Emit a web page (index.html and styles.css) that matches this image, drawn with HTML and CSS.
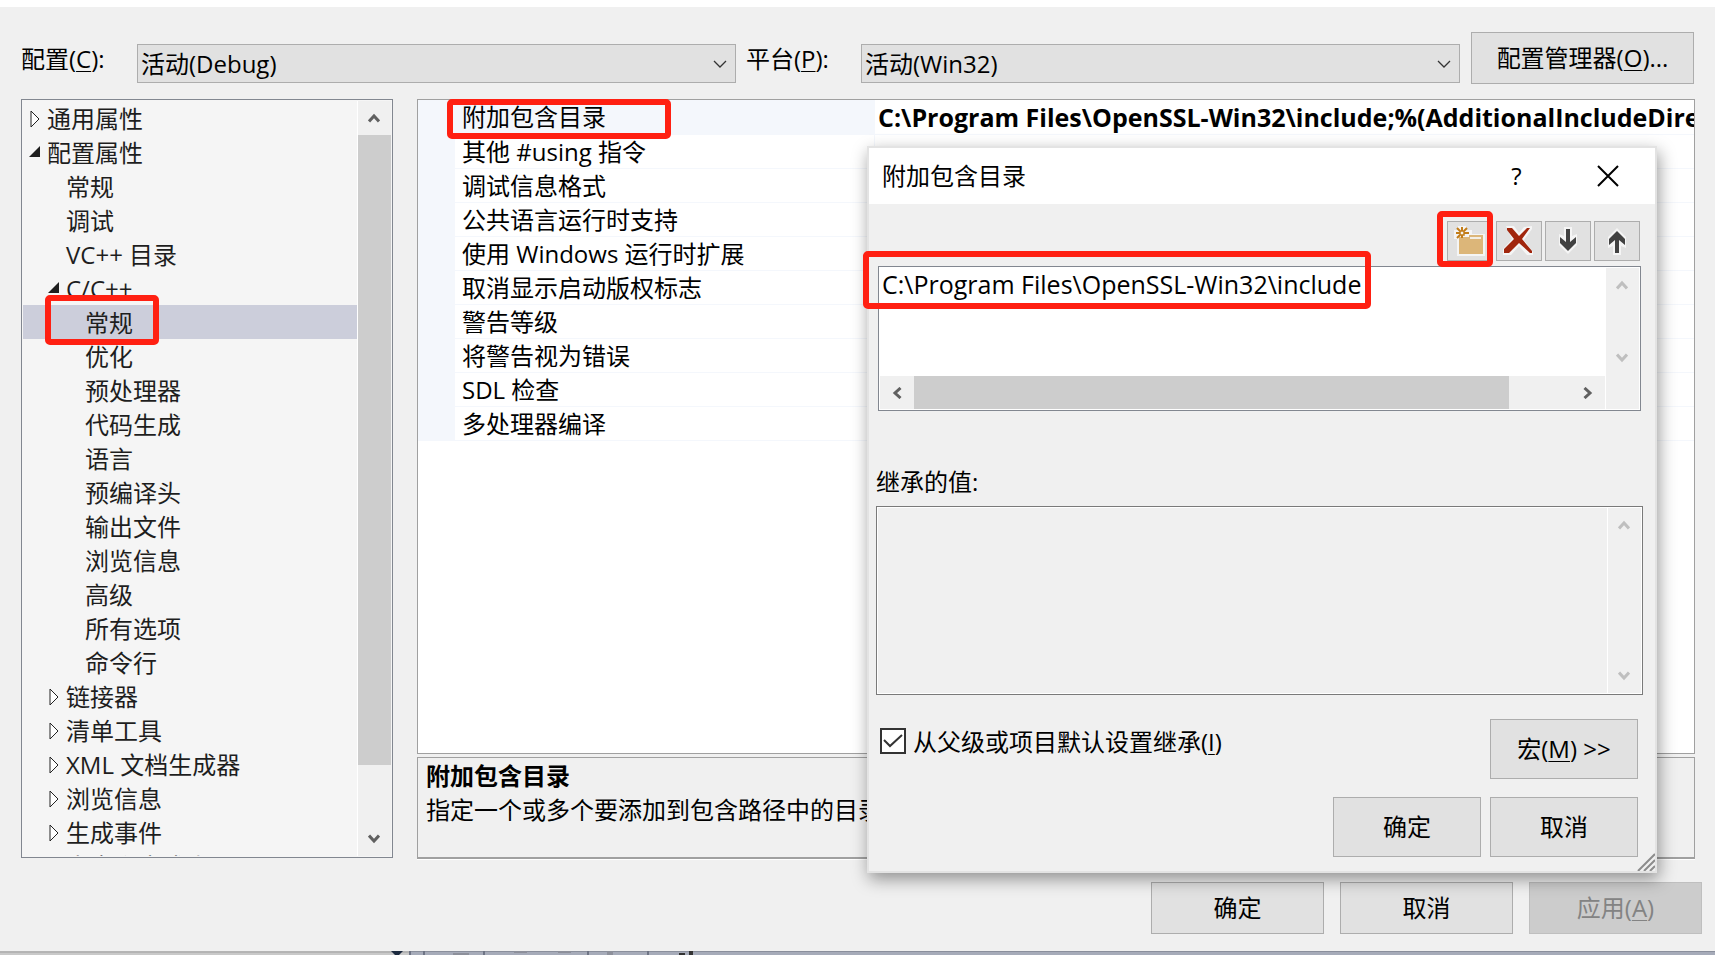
FILE: index.html
```html
<!DOCTYPE html>
<html lang="zh-CN">
<head>
  <meta charset="UTF-8">
  <title>属性页</title>
  <link rel="stylesheet" href="styles.css">
</head>
<body>

<svg class="defs" aria-hidden="true">
  <symbol id="up" viewBox="0 0 12 10"><path d="M1 8.500l5-5.500 5 5.500" fill="none" stroke="currentColor" stroke-width="3"/></symbol>
  <symbol id="down" viewBox="0 0 12 10"><path d="M1 1.500l5 5.500 5-5.500" fill="none" stroke="currentColor" stroke-width="3"/></symbol>
  <symbol id="left" viewBox="0 0 10 12"><path d="M8.500 1L3 6l5.500 5" fill="none" stroke="currentColor" stroke-width="3"/></symbol>
  <symbol id="right" viewBox="0 0 10 12"><path d="M1.500 1L7 6l-5.500 5" fill="none" stroke="currentColor" stroke-width="3"/></symbol>
  <symbol id="chevron" viewBox="0 0 14 8"><path d="M1 1l6 6 6-6" fill="none" stroke="#333" stroke-width="1.300"/></symbol>
  <symbol id="closed" viewBox="0 0 10 18"><path d="M1 1v16l8-8z" fill="#fff" stroke="#222" stroke-width="1"/></symbol>
  <symbol id="open" viewBox="0 0 11 11"><path d="M11 0v11H0z" fill="#1e1e1e"/></symbol>
</svg>

<div class="dialog">
  <div class="toolbar">
    <label class="config-label" for="config">配置(<u>C</u>):</label>
    <div class="combo">
      <select id="config"><option>活动(Debug)</option></select>
      <svg width="14" height="8"><use href="#chevron"/></svg>
    </div>
    <label class="platform-label" for="platform">平台(<u>P</u>):</label>
    <div class="combo">
      <select id="platform"><option>活动(Win32)</option></select>
      <svg width="14" height="8"><use href="#chevron"/></svg>
    </div>
    <button class="manager">配置管理器(<u>O</u>)...</button>
  </div>

  <div class="content">
    <div class="tree">
      <ul class="nodes">
        <li><svg class="closed"><use href="#closed"/></svg>通用属性</li>
        <li><svg class="open"><use href="#open"/></svg>配置属性</li>
        <li class="level2">常规</li>
        <li class="level2">调试</li>
        <li class="level2">VC++ 目录</li>
        <li class="level2"><svg class="open"><use href="#open"/></svg>C/C++</li>
        <li class="level3 selected">常规<span class="mark mark-tree"></span></li>
        <li class="level3">优化</li>
        <li class="level3">预处理器</li>
        <li class="level3">代码生成</li>
        <li class="level3">语言</li>
        <li class="level3">预编译头</li>
        <li class="level3">输出文件</li>
        <li class="level3">浏览信息</li>
        <li class="level3">高级</li>
        <li class="level3">所有选项</li>
        <li class="level3">命令行</li>
        <li class="level2"><svg class="closed"><use href="#closed"/></svg>链接器</li>
        <li class="level2"><svg class="closed"><use href="#closed"/></svg>清单工具</li>
        <li class="level2"><svg class="closed"><use href="#closed"/></svg>XML 文档生成器</li>
        <li class="level2"><svg class="closed"><use href="#closed"/></svg>浏览信息</li>
        <li class="level2"><svg class="closed"><use href="#closed"/></svg>生成事件</li>
        <li class="level2">自定义生成步骤</li>
      </ul>
      <div class="scroll">
        <button aria-label="向上"><svg width="12" height="10"><use href="#up"/></svg></button>
        <div class="thumb"></div>
        <div class="track"></div>
        <button aria-label="向下"><svg width="12" height="10"><use href="#down"/></svg></button>
      </div>
    </div>

    <div class="properties">
      <div class="grid">
        <table>
          <tr class="current">
            <td class="gutter"></td>
            <td class="name">附加包含目录<span class="mark mark-name"></span></td>
            <td class="value">C:\Program Files\OpenSSL-Win32\include;%(AdditionalIncludeDirectories)</td>
          </tr>
          <tr><td class="gutter"></td><td class="name">其他 #using 指令</td><td class="value"></td></tr>
          <tr><td class="gutter"></td><td class="name">调试信息格式</td><td class="value"></td></tr>
          <tr><td class="gutter"></td><td class="name">公共语言运行时支持</td><td class="value"></td></tr>
          <tr><td class="gutter"></td><td class="name">使用 Windows 运行时扩展</td><td class="value"></td></tr>
          <tr><td class="gutter"></td><td class="name">取消显示启动版权标志</td><td class="value"></td></tr>
          <tr><td class="gutter"></td><td class="name">警告等级</td><td class="value"></td></tr>
          <tr><td class="gutter"></td><td class="name">将警告视为错误</td><td class="value"></td></tr>
          <tr><td class="gutter"></td><td class="name">SDL 检查</td><td class="value"></td></tr>
          <tr><td class="gutter"></td><td class="name">多处理器编译</td><td class="value"></td></tr>
        </table>
      </div>
      <div class="description">
        <b>附加包含目录</b>
        <p>指定一个或多个要添加到包含路径中的目录</p>
      </div>
    </div>
  </div>

  <div class="footer">
    <button>确定</button>
    <button>取消</button>
    <button disabled>应用(<u>A</u>)</button>
  </div>

  <!-- Additional include directories popup -->
  <div class="popup" role="dialog" aria-labelledby="popup-title">
    <div class="titlebar">
      <span id="popup-title">附加包含目录</span>
      <button class="help">?</button>
      <button class="close" aria-label="关闭"><svg width="22" height="22" viewBox="0 0 22 22"><path d="M1 1l20 20M21 1L1 21" stroke="#000" stroke-width="2"/></svg></button>
    </div>

    <div class="popup-body">
      <div class="tools">
        <button aria-label="新行">
          <svg width="32" height="32" viewBox="0 0 32 32">
            <path d="M0 5h4V1h8v4h6v4h13v22H3V14H0z" fill="#f5f5f5"/>
            <path d="M5 12h10v-2h14v19H5z" fill="#dcb679"/>
            <path d="M16 12h11v2H16z" fill="#f3eee4"/>
            <path d="M8 2v4M8 10v3M2 8h4M10 8h5M3 3l3 3M13 3l-3 3M3 13l3-3" stroke="#c27d1a" stroke-width="2"/>
            <path d="M6 6h4v4H6z" fill="#f5f5f5" stroke="#c27d1a" stroke-width="1.500"/>
          </svg>
          <span class="mark mark-new"></span>
        </button>
        <button aria-label="删除">
          <svg width="32" height="32" viewBox="0 0 32 32">
            <path d="M3 1h8l5 7 5-6 8-1v3l-8 11 9 12v3h-6l-8-9-8 9H0v-6l9-10z" fill="#f5f5f5"/>
            <path d="M4 3h5l7 8 8-8h3l-8 11 10 12v2h-2L16 18 6 28H1v-4l10-10-7-9z" fill="#a1260d"/>
          </svg>
        </button>
        <button aria-label="下移">
          <svg width="32" height="32" viewBox="0 0 32 32">
            <path d="M12 2h8v9l5-2v11l-9 9-9-9V9l5 2z" fill="#f5f5f5"/>
            <path d="M14 4h4v13l6-5v6l-8 8-8-8v-6l6 5z" fill="#424242"/>
          </svg>
        </button>
        <button aria-label="上移">
          <svg width="32" height="32" viewBox="0 0 32 32">
            <path d="M12 30h8v-9l5 2V12l-9-9-9 9v11l5-2z" fill="#f5f5f5"/>
            <path d="M14 28h4V15l6 5v-6l-8-8-8 8v6l6-5z" fill="#424242"/>
          </svg>
        </button>
      </div>

      <div class="paths">
        <div class="paths-main">
          <input type="text" aria-label="目录" value="C:\Program Files\OpenSSL-Win32\include">
          <div class="hscroll">
            <button aria-label="向左"><svg width="10" height="12"><use href="#left"/></svg></button>
            <div class="thumb"></div>
            <div class="track"></div>
            <button aria-label="向右"><svg width="10" height="12"><use href="#right"/></svg></button>
          </div>
        </div>
        <div class="scroll off">
          <button aria-label="向上"><svg width="12" height="10"><use href="#up"/></svg></button>
          <div class="track"></div>
          <button aria-label="向下"><svg width="12" height="10"><use href="#down"/></svg></button>
        </div>
        <span class="mark mark-path"></span>
      </div>

      <label class="inherited-label" for="inherited">继承的值:</label>
      <div class="inherited">
        <textarea id="inherited" readonly></textarea>
        <div class="scroll off">
          <button aria-label="向上"><svg width="12" height="10"><use href="#up"/></svg></button>
          <div class="track"></div>
          <button aria-label="向下"><svg width="12" height="10"><use href="#down"/></svg></button>
        </div>
      </div>

      <div class="options">
        <div class="check">
          <input type="checkbox" id="inherit" checked>
          <svg width="20" height="16" viewBox="0 0 20 16"><path d="M1 7l6 6L19 2" fill="none" stroke="#333" stroke-width="2"/></svg>
          <label for="inherit">从父级或项目默认设置继承(<u>I</u>)</label>
        </div>
        <button class="big">宏(<u>M</u>) &gt;&gt;</button>
      </div>

      <div class="actions">
        <button class="big">确定</button>
        <button class="big">取消</button>
      </div>
    </div>
    <svg class="grip" width="18" height="18" viewBox="0 0 18 18">
      <path d="M1 18L18 1M7 18L18 7M13 18l5-5" stroke="#8c8c8c" stroke-width="2"/>
    </svg>
  </div>
</div>

<!-- top edge of the window behind -->
<div class="behind">
  <svg width="720" height="4" viewBox="0 0 720 4">
    <path d="M0 0h409v4H0z" fill="#c9c9c9"/>
    <path d="M0 1h409" stroke="#a0a0a0"/>
    <path d="M391 0h12l-4 4h-4z" fill="#1b293e"/>
    <path d="M409 0h2v4h-2zM423 0h2v4h-2zM483 0h2v4h-2zM587 0h2v4h-2zM647 0h2v4h-2z" fill="#6e7485"/>
    <path d="M453 2h16v2h-16zM514 0h13v2h-13zM558 0h13v2h-13zM607 0h6v4h-6z" fill="#8d909b"/>
    <path d="M679 2h6v2h-6zM689 0h4v4h-4z" fill="#333"/>
  </svg>
</div>

</body>
</html>
```

FILE: styles.css
```css
* {
  box-sizing: border-box;
}
body {
  margin: 0;
  min-height: 100vh;
  display: flex;
  flex-direction: column;
  background: #fff;
  color: #000;
  font: 24px/34px "Open Sans", "Noto Sans CJK SC", sans-serif;
}
button, input, select, textarea {
  font: inherit;
  color: inherit;
}
button {
  padding: 0;
  background: #e1e1e1;
  border: 1px solid #adadad;
}
u {
  text-decoration-thickness: 1px;
  text-underline-offset: 3px;
}
svg {
  display: block;
  flex: none;
}
.defs {
  position: absolute;
  width: 0;
  height: 0;
}
.dialog {
  position: relative;
  flex: 1;
  display: flex;
  flex-direction: column;
  margin-top: 7px;
  padding: 25px 13px 17px 21px;
  background: #f0f0f0;
}

/* red highlight frames */
.mark {
  position: absolute;
  z-index: 2;
  border: 6px solid #ff2012;
  border-radius: 5px;
  pointer-events: none;
}

/* top row */
.toolbar {
  display: flex;
  align-items: flex-start;
  padding-right: 8px;
}
.toolbar label {
  padding-top: 10px;
  white-space: nowrap;
}
.config-label {
  width: 116px;
}
.platform-label {
  width: 115px;
}
.combo {
  position: relative;
  flex: 1;
  margin: 12px 10px 0 0;
}
.combo + button {
  margin-left: 1px;
}
.combo select {
  display: block;
  width: 100%;
  height: 39px;
  padding: 0 3px;
  appearance: none;
  background: #e1e1e1;
  border: 1px solid #adadad;
  border-radius: 0;
}
.combo svg {
  position: absolute;
  right: 9px;
  top: 16px;
}
.manager {
  width: 223px;
  height: 52px;
}

/* tree and property grid */
.content {
  flex: 1;
  display: flex;
  gap: 24px;
  margin-top: 15px;
  padding-right: 7px;
}
.tree {
  display: flex;
  width: 372px;
  height: 759px;
  padding: 1px;
  background: #f5f5f5;
  border: 1px solid #828790;
}
.nodes {
  flex: 1;
  margin: 0;
  padding: 0;
  list-style: none;
  overflow: hidden;
  color: #1e1e1e;
}
.nodes li {
  position: relative;
  height: 34px;
  padding-left: 24px;
  line-height: 36px;
  white-space: nowrap;
}
.nodes .level2 {
  padding-left: 43px;
}
.nodes .level3 {
  padding-left: 62px;
}
.nodes .selected {
  background: #cccedb;
}
.nodes svg {
  float: left;
}
.nodes .closed {
  width: 10px;
  height: 18px;
  margin: 9px 7px 0 -17px;
}
.nodes .open {
  width: 11px;
  height: 11px;
  margin: 11px 7px 0 -18px;
}
.mark-tree {
  left: 22px;
  top: -10px;
  width: 114px;
  height: 50px;
}
.scroll {
  display: flex;
  flex-direction: column;
  width: 34px;
  background: #f0f0f0;
  border-left: 1px solid #fff;
  color: #606060;
}
.scroll button, .hscroll button {
  display: flex;
  align-items: center;
  justify-content: center;
  width: 32px;
  height: 34px;
  background: none;
  border: 0;
}
.thumb {
  background: #cdcdcd;
}
.tree .thumb {
  height: 630px;
}
.track {
  flex: 1;
}
.off {
  color: #bfbfbf;
}
.properties {
  flex: 1;
  min-width: 0;
  display: flex;
  flex-direction: column;
  gap: 3px;
  height: 760px;
}
.grid {
  flex: 1;
  background: #fff;
  border: 1px solid #a0a0a0;
}
.grid table {
  width: 100%;
  table-layout: fixed;
  border-collapse: separate;
  border-spacing: 0;
}
.grid td {
  height: 34px;
  padding: 0;
  line-height: 33px;
  white-space: nowrap;
  border-bottom: 1px solid #f4f7fc;
}
.grid .gutter {
  width: 37px;
  background: #f4f7fc;
}
.grid .name {
  position: relative;
  width: 420px;
  padding-left: 7px;
  border-right: 1px solid #f4f7fc;
}
.grid .current td {
  height: 35px;
  line-height: 34px;
}
.current .name {
  background: #f4f7fc;
}
.grid .value {
  padding-left: 3px;
  overflow: hidden;
  font-size: 25px;
  font-weight: bold;
}
.mark-name {
  left: -8px;
  top: -1px;
  width: 224px;
  height: 40px;
}
.description {
  height: 102px;
  padding: 1px 8px;
  border: 1px solid #a0a0a0;
  border-bottom-width: 2px;
  box-shadow: 0 1px #fff;
  white-space: nowrap;
  overflow: hidden;
}
.description b {
  display: block;
}
.description p {
  margin: 0;
}

/* bottom buttons */
.footer {
  display: flex;
  justify-content: flex-end;
  gap: 16px;
}
.footer button {
  width: 173px;
  height: 52px;
}
.footer button:disabled {
  color: #838383;
  background: #ccc;
  border-color: #bfbfbf;
}

/* popup window */
.popup {
  position: absolute;
  top: 139px;
  right: 58px;
  width: 790px;
  background: #f0f0f0;
  border: 2px solid #e3e3e3;
  box-shadow: 2px 6px 16px rgba(0,0,0,0.4);
}
.titlebar {
  display: flex;
  align-items: center;
  height: 56px;
  padding: 0 2px 0 13px;
  background: #fff;
}
.titlebar span {
  flex: 1;
}
.titlebar button {
  display: flex;
  align-items: center;
  justify-content: center;
  height: 54px;
  width: 91px;
  background: none;
  border: 0;
}
.popup-body {
  padding: 17px 13px 14px 7px;
}
.tools {
  display: flex;
  justify-content: flex-end;
  gap: 3px;
  padding-right: 2px;
}
.tools button {
  position: relative;
  display: flex;
  align-items: center;
  justify-content: center;
  width: 46px;
  height: 40px;
}
.mark-new {
  left: -11px;
  top: -11px;
  width: 56px;
  height: 56px;
}
.paths {
  position: relative;
  display: flex;
  height: 145px;
  margin: 5px 1px 0 2px;
  padding: 1px;
  background: #fff;
  border: 1px solid #828790;
}
.paths-main {
  flex: 1;
  display: flex;
  flex-direction: column;
  justify-content: space-between;
}
.paths input {
  width: 100%;
  height: 32px;
  padding: 0 2px;
  border: 0;
  outline: 0;
  font-size: 25px;
}
.paths .scroll {
  padding-bottom: 34px;
}
.hscroll {
  display: flex;
  height: 33px;
  background: #f0f0f0;
  color: #606060;
}
.hscroll button {
  width: 34px;
}
.hscroll .thumb {
  width: 595px;
}
.mark-path {
  left: -16px;
  top: -16px;
  width: 508px;
  height: 58px;
}
.inherited-label {
  display: block;
  margin: 54px 0 7px;
}
.inherited {
  display: flex;
  height: 189px;
  margin-right: -1px;
  border: 1px solid #7a7a7a;
  box-shadow: inset 0 0 0 1px #fff;
  padding: 1px;
}
.inherited textarea {
  flex: 1;
  padding: 0;
  border: 0;
  outline: 0;
  resize: none;
  background: #f0f0f0;
}
.options {
  display: flex;
  justify-content: space-between;
  margin: 24px 4px 18px 4px;
}
.big {
  width: 148px;
  height: 60px;
}
.check {
  position: relative;
  display: flex;
  height: 44px;
  align-items: center;
  gap: 7px;
}
.check input {
  width: 26px;
  height: 26px;
  margin: 0;
  appearance: none;
  background: #fff;
  border: 2px solid #333;
}
.check label {
  padding-top: 2px;
}
.check svg {
  position: absolute;
  left: 3px;
  top: 14px;
}
.actions {
  display: flex;
  justify-content: flex-end;
  gap: 9px;
  margin-right: 4px;
}
.grip {
  position: absolute;
  right: 0;
  bottom: 0;
}

.behind {
  height: 4px;
  background: #a6abb9;
  box-shadow: inset 0 1px #8a8f9c;
}
```
